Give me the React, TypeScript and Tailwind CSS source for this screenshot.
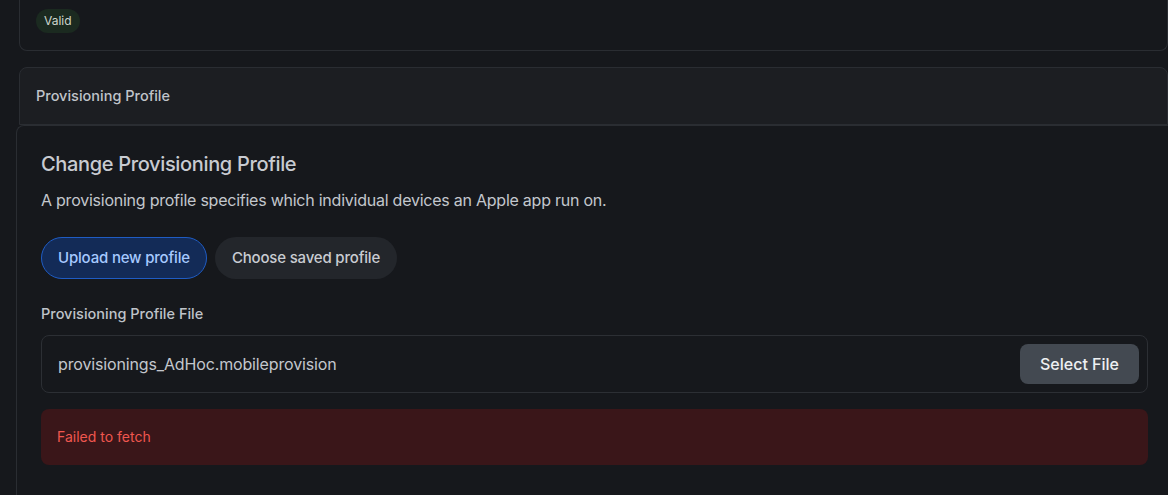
import { useState } from "react";

function ValidCard() {
  return (
    <div className="ml-[3px] mr-[4px] flex rounded-b-lg border-x border-b border-[#2a2d32] pl-4 pt-[9px] pb-[17px]">
      <span className="inline-flex h-6 items-center rounded-full bg-[#1b2a20] px-2 text-xs leading-4 text-[#cdd5cd]">
        Valid
      </span>
    </div>
  );
}

function ProvisioningPanel() {
  const [mode, setMode] = useState<"upload" | "saved">("upload");

  return (
    <div className="rounded-tl-lg border-l border-t border-[#2a2d32] bg-[#16181c] pl-6 pr-6 pt-6 pb-10">
      <h2 className="text-[20px] leading-7 font-medium tracking-[-0.017em] text-[#c8cbd1]">
        Change Provisioning Profile
      </h2>
      <p className="mt-2.5 text-base leading-6 tracking-[-0.015em] text-[#c3c7cd]">
        A provisioning profile specifies which individual devices an Apple app run on.
      </p>

      {/* Profile source toggle */}
      <div className="mt-[25px] flex gap-2">
        <button
          onClick={() => setMode("upload")}
          className={`h-[42px] rounded-full border px-4 text-[15px] font-medium tracking-[-0.012em] ${
            mode === "upload"
              ? "border-[#1f5cc4] bg-[#132b57] text-[#a6c9ff]"
              : "border-transparent bg-[#23262b] text-[#c9ccd2]"
          }`}
        >
          Upload new profile
        </button>
        <button
          onClick={() => setMode("saved")}
          className={`h-[42px] rounded-full border px-4 text-[15px] font-medium tracking-[-0.012em] ${
            mode === "saved"
              ? "border-[#1f5cc4] bg-[#132b57] text-[#a6c9ff]"
              : "border-transparent bg-[#23262b] text-[#c9ccd2]"
          }`}
        >
          Choose saved profile
        </button>
      </div>

      <label className="mt-[25px] block text-[14.5px] leading-5 font-medium text-[#bfc3c9]">
        Provisioning Profile File
      </label>
      <div className="mt-[11px] flex items-center justify-between rounded-lg border border-[#2c2f34] py-2 pl-4 pr-2">
        <span className="text-base tracking-[-0.009em] text-[#c3c7cd]">provisionings_AdHoc.mobileprovision</span>
        <button className="h-10 rounded-lg bg-[#434951] px-5 text-base font-medium text-[#eef0f2]">
          Select File
        </button>
      </div>

      <div className="mt-4 rounded-lg bg-[#3a1619] px-4 py-[18px] text-sm leading-5 text-[#f0564f]">
        Failed to fetch
      </div>
    </div>
  );
}

export default function App() {
  return (
    <div
      className="h-[495px] w-full overflow-hidden bg-[#16181c]"
      style={{ fontFamily: "Inter, 'Noto Sans', sans-serif" }}
    >
      <div className="w-[1172px] pl-4">
        <ValidCard />
        <div className="mt-4 ml-[3px] mr-[4px] flex rounded-t-lg border border-[#2a2d32] bg-[#1c1e22] px-4 py-[18px]">
          <span className="text-[14.5px] leading-5 font-medium text-[#c0c4ca]">Provisioning Profile</span>
        </div>
        <ProvisioningPanel />
      </div>
    </div>
  );
}
